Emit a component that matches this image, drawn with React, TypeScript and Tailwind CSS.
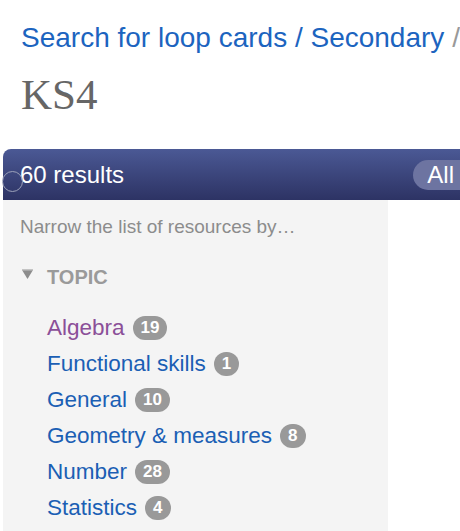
import React from 'react';

const topics = [
  { name: 'Algebra', count: 19, visited: true },
  { name: 'Functional skills', count: 1 },
  { name: 'General', count: 10 },
  { name: 'Geometry & measures', count: 8 },
  { name: 'Number', count: 28 },
  { name: 'Statistics', count: 4 },
];

export default function App() {
  return (
    <div className="w-[460px] h-[531px] overflow-hidden bg-white font-['Liberation_Sans',Arial,sans-serif]">
      {/* Breadcrumb + title */}
      <div className="pl-[21px] pt-[22px] whitespace-nowrap">
        <div className="text-[28px] leading-[32px] text-[#1c64bf]">
          Search for loop cards / Secondary <span className="text-[#999]">/</span>
        </div>
        <h1 className="mt-[15px] text-[43px] leading-[52px] text-[#666] font-['Liberation_Serif','Times_New_Roman',serif]">
          KS4
        </h1>
      </div>

      {/* Results bar */}
      <div className="relative mt-[28px] ml-[3px] h-[51px] rounded-tl-[8px] bg-gradient-to-b from-[#4b5995] to-[#2d3364] flex items-center justify-between">
        <span className="absolute left-[-1px] top-[22px] w-[21px] h-[21px] rounded-full border-[1.5px] border-[#9ca1b9]" />
        <span className="pl-[17px] text-[24px] text-white">60 results</span>
        <span className="mr-[-14px] h-[30px] pl-[14px] pr-[20px] rounded-full bg-[#6d74a1] text-white text-[24px] leading-[30px]">All</span>
      </div>

      {/* Filter panel */}
      <div className="ml-[3px] w-[385px] h-[331px] bg-[#f4f4f4] pt-[16px]">
        <p className="pl-[17px] text-[19px] leading-[22px] text-[#8c8c8c]">Narrow the list of resources by…</p>
        <div className="mt-[27px] h-[24px] flex items-center">
          <svg width="13" height="11" viewBox="0 0 13 11" className="ml-[18px] mt-[-6px]">
            <polygon points="1,1 12,1 6.5,10" fill="#8c8c8c" />
            <rect x="1" y="0" width="11" height="1.5" fill="#c4c4c4" />
          </svg>
          <span className="ml-[13px] text-[20px] font-bold text-[#9a9a9a]">TOPIC</span>
        </div>
        <ul className="mt-[21px] pl-[44px]">
          {topics.map((t) => (
            <li key={t.name} className="h-[36px] flex items-center">
              <a className={`text-[22.5px] ${t.visited ? 'text-[#8b4f98]' : 'text-[#1b5fb4]'}`}>{t.name}</a>
              <span className="ml-[8px] h-[24px] min-w-[25px] px-[8px] rounded-full bg-[#999] text-white text-[17px] font-bold leading-[24px] text-center">
                {t.count}
              </span>
            </li>
          ))}
        </ul>
      </div>
    </div>
  );
}
